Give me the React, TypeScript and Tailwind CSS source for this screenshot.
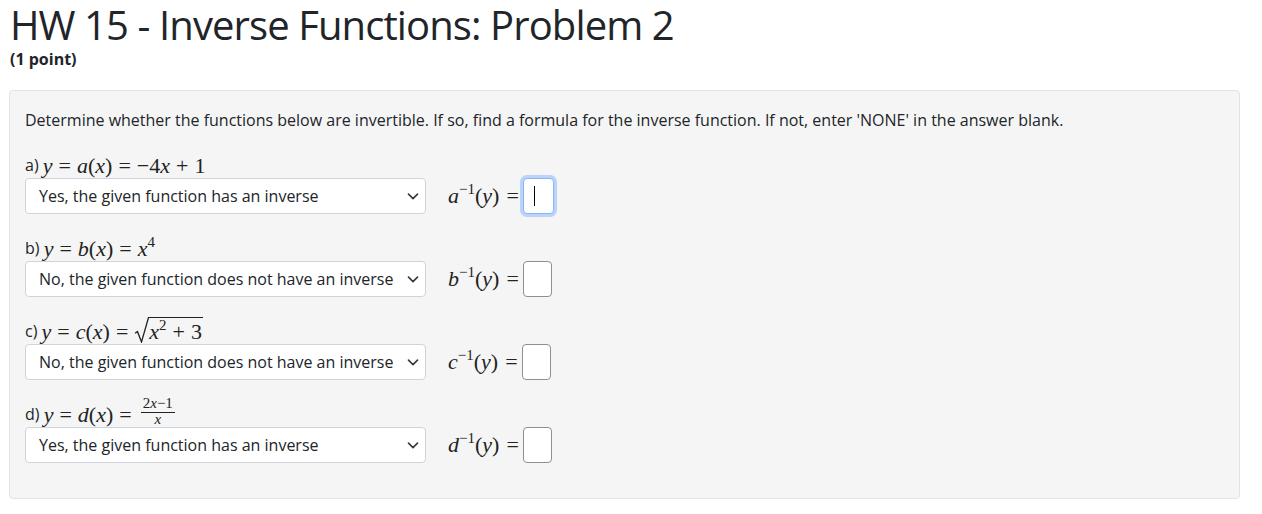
import React from "react";

const sans = { fontFamily: '"Open Sans", "Noto Sans", sans-serif' };

const V = ({ children }: { children: React.ReactNode }) => (
    <span className="italic">{children}</span>
);

const Op = ({ children, tight }: { children: React.ReactNode; tight?: boolean }) => (
    <span className={tight ? "ml-[7px] mr-[4px]" : "mx-[6px]"}>{children}</span>
);

const Sup = ({ children }: { children: React.ReactNode }) => (
    <sup className="relative -top-[9px] text-[15px] leading-none align-baseline">{children}</sup>
);

const Math = ({ children, className = "" }: { children: React.ReactNode; className?: string }) => (
    <span className={`text-[22px] leading-none text-[#222] ${className}`} style={{ fontFamily: '"Liberation Serif", "DejaVu Serif", serif' }}>
        {children}
    </span>
);

const Inverse = ({ f }: { f: string }) => (
    <Math className="whitespace-nowrap">
        <V>{f}</V>
        <Sup>−1</Sup>(<V>y</V>)<Op tight>=</Op>
    </Math>
);

const Chevron = () => (
    <svg width="12" height="12" viewBox="0 0 16 16" className="shrink-0">
        <path d="M2 5.5l6 6 6-6" fill="none" stroke="#343a40" strokeWidth="2.2" strokeLinecap="round" strokeLinejoin="round" />
    </svg>
);

const Row = ({ label, answer, f, focused }: { label: React.ReactNode; answer: string; f: string; focused?: boolean }) => (
    <div className="mb-[23px]">
        <div className="h-[24px] flex items-end pb-[1px] text-[16px] text-[#212529] whitespace-nowrap">{label}</div>
        <div className="flex items-center">
            <div className="w-[401px] h-[36px] flex items-center justify-between pl-[13px] pr-[6px] bg-white border border-[#ced4da] rounded-[4px] text-[16px] text-[#212529]">
                <span>{answer}</span>
                <Chevron />
            </div>
            <div className="ml-[22px] flex items-center">
                <Inverse f={f} />
                {focused ? (
                    <div className="w-[31px] h-[36px] bg-white border border-[#86b7fe] rounded-[4px] shadow-[0_0_0_3px_rgba(13,110,253,0.25)] flex items-center pl-[10px]">
                        <div className="w-[1px] h-[20px] bg-black" />
                    </div>
                ) : (
                    <div className="w-[29px] h-[36px] -mt-[1px] bg-white border border-[#8f8f8f] rounded-[4px]" />
                )}
            </div>
        </div>
    </div>
);

export default function App() {
    return (
        <div className="min-h-screen bg-white text-[#212529] pl-[9px] pr-[22px] pt-[1px]" style={sans}>
            <h1 className="ml-[1px] text-[40px] leading-[48px] font-normal tracking-[-0.9px]">HW 15 - Inverse Functions: Problem 2</h1>
            <p className="ml-[1px] text-[16px] font-bold leading-[20px]">(1 point)</p>

            <div className="mt-[21px] bg-[#f5f5f5] border border-[#e3e3e3] rounded-[4px] px-[15px] pt-[17px] pb-[12px]">
                <p className="text-[16px] leading-[24px] mb-[22px]">
                    Determine whether the functions below are invertible. If so, find a formula for the inverse function. If not, enter 'NONE' in the answer blank.
                </p>

                <Row
                    label={<>a)&nbsp;<Math><V>y</V><Op>=</Op><V>a</V>(<V>x</V>)<Op>=</Op>−4<V>x</V><Op>+</Op>1</Math></>}
                    answer="Yes, the given function has an inverse"
                    f="a"
                    focused
                />
                <Row
                    label={<>b)&nbsp;<Math><V>y</V><Op>=</Op><V>b</V>(<V>x</V>)<Op>=</Op><V>x</V><Sup>4</Sup></Math></>}
                    answer="No, the given function does not have an inverse"
                    f="b"
                />
                <Row
                    label={
                        <>
                            c)&nbsp;
                            <Math className="inline-flex items-end">
                                <V>y</V><Op>=</Op><V>c</V>(<V>x</V>)<Op>=</Op>
                                <span className="inline-flex items-stretch">
                                    <svg width="15" viewBox="0 0 15 24" preserveAspectRatio="none" className="shrink-0 self-stretch">
                                        <path d="M1 15 L3.5 13.5 L7.5 23 L14.5 0.5 L15 0.5" fill="none" stroke="#222" strokeWidth="1.3" strokeLinejoin="miter" />
                                    </svg>
                                    <span className="border-t border-[#222] pt-[3px] pr-[1px] leading-none">
                                        <V>x</V><Sup>2</Sup><Op>+</Op>3
                                    </span>
                                </span>
                            </Math>
                        </>
                    }
                    answer="No, the given function does not have an inverse"
                    f="c"
                />
                <Row
                    label={
                        <>
                            d)&nbsp;
                            <Math className="inline-flex items-center">
                                <V>y</V><Op>=</Op><V>d</V>(<V>x</V>)<Op>=</Op>
                                <span className="ml-[3px] -mt-[6px] inline-flex flex-col items-center text-[15px] leading-[13px]">
                                    <span className="px-[2px] pb-[2px] border-b border-[#222]">2<V>x</V>−1</span>
                                    <V>x</V>
                                </span>
                            </Math>
                        </>
                    }
                    answer="Yes, the given function has an inverse"
                    f="d"
                />
            </div>
        </div>
    );
}
